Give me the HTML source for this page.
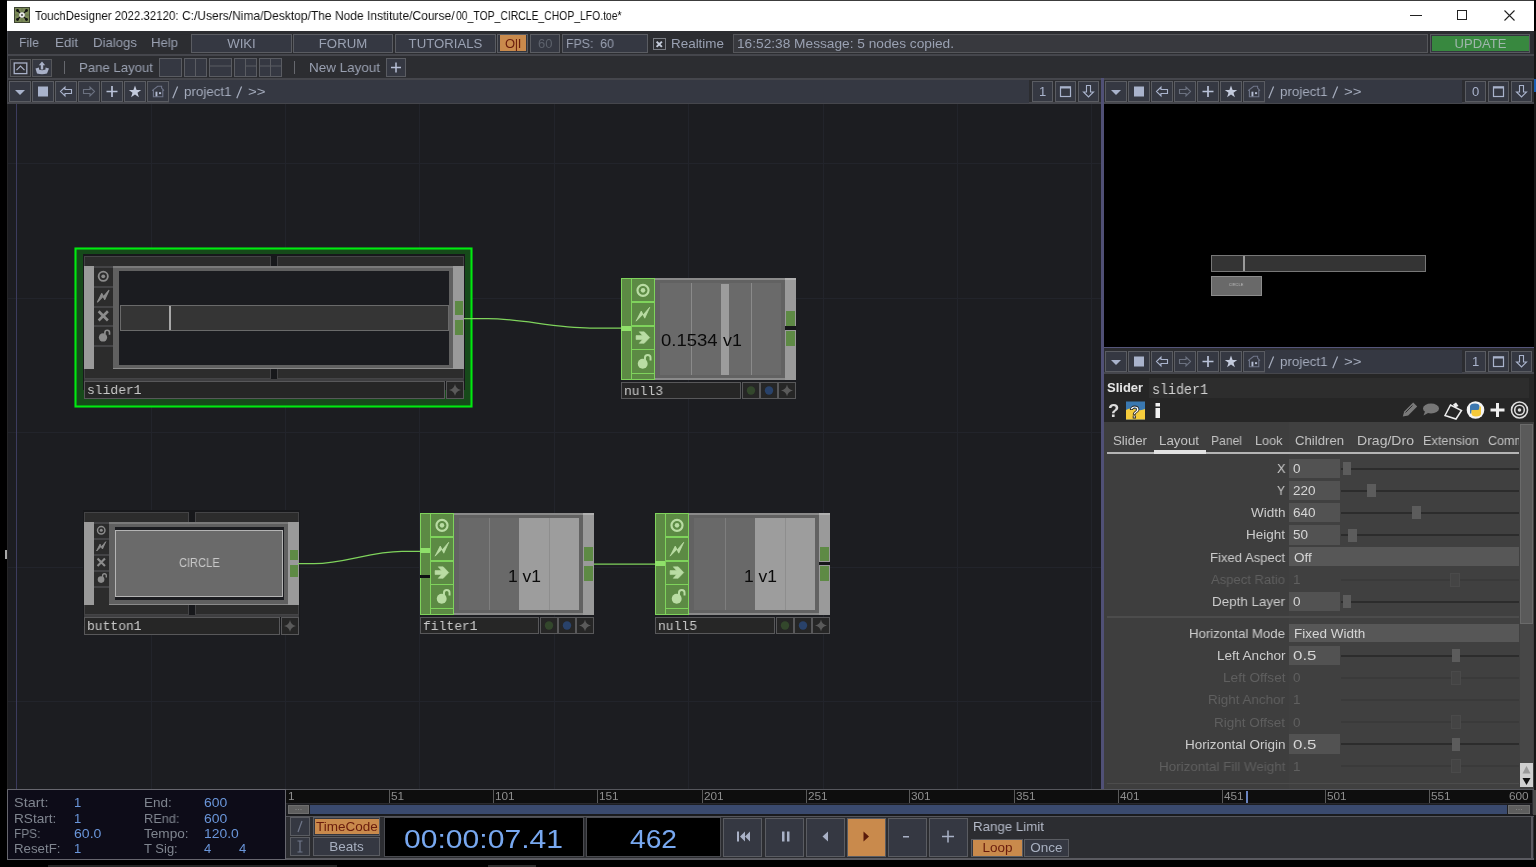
<!DOCTYPE html>
<html><head><meta charset="utf-8">
<style>
*{margin:0;padding:0;box-sizing:border-box}
html,body{width:1536px;height:867px;overflow:hidden;background:#000;font-family:"Liberation Sans",sans-serif}
.a{position:absolute}
.t{position:absolute;white-space:nowrap;line-height:1;will-change:transform}
.m{position:absolute;white-space:nowrap;line-height:1;will-change:transform;font-family:"Liberation Mono",monospace}
svg{overflow:visible}
</style></head><body>
<div class="a" style="left:7px;top:0px;width:1527px;height:1px;background:#3c3c3c;"></div>
<div class="a" style="left:7px;top:1px;width:1527px;height:30px;background:#fff;"></div>
<svg class="a" style="left:14px;top:7px" width="16" height="16" viewBox="0 0 16 16">
<rect x="0.5" y="0.5" width="15" height="15" fill="#7b8a58" stroke="#3d4432" stroke-width="1"/>
<path d="M8 1V15M1 8H15" stroke="#66744a" stroke-width="1"/>
<path d="M3.5 3.5L6.5 6.5M12.5 3.5L9.5 6.5M3.5 12.5L6.5 9.5M12.5 12.5L9.5 9.5" stroke="#1a1a1a" stroke-width="1.4"/>
<circle cx="3.5" cy="3.5" r="1.4" fill="#111"/><circle cx="12.5" cy="3.5" r="1.4" fill="#111"/><circle cx="3.5" cy="12.5" r="1.4" fill="#111"/><circle cx="12.5" cy="12.5" r="1.4" fill="#111"/>
<circle cx="8" cy="8" r="2.8" fill="#e8e8e8"/><circle cx="8" cy="8" r="0.9" fill="#333"/>
</svg>
<div class="t" style="left:35px;top:8.99px;font-size:13px;color:#111;transform:scaleX(0.8830);transform-origin:0 0;">TouchDesigner 2022.32120:</div>
<div class="t" style="left:182.3px;top:8.99px;font-size:13px;color:#111;transform:scaleX(0.9244);transform-origin:0 0;">C:/Users/Nima/Desktop/The Node Institute/Course/</div>
<div class="t" style="left:456px;top:8.99px;font-size:13px;color:#111;transform:scaleX(0.7995);transform-origin:0 0;">00_TOP_CIRCLE_CHOP_LFO.toe*</div>
<div class="a" style="left:1410px;top:15px;width:12px;height:1px;background:#222;"></div>
<div class="a" style="left:1457px;top:10px;width:10px;height:10px;border:1px solid #222;"></div>
<svg class="a" style="left:1504px;top:10px" width="11" height="11" viewBox="0 0 11 11"><path d="M0.5 0.5L10.5 10.5M10.5 0.5L0.5 10.5" stroke="#222" stroke-width="1.1"/></svg>
<div class="a" style="left:7px;top:31px;width:1527px;height:829px;background:#2c2d31;"></div>
<div class="a" style="left:7px;top:31px;width:1px;height:758px;background:#45464c;"></div>
<div class="t" style="left:19px;top:36.07px;font-size:13.5px;color:#9aa1b2;transform:scaleX(0.9189);transform-origin:0 0;">File</div>
<div class="t" style="left:55px;top:36.07px;font-size:13.5px;color:#9aa1b2;transform:scaleX(0.9886);transform-origin:0 0;">Edit</div>
<div class="t" style="left:93px;top:36.07px;font-size:13.5px;color:#9aa1b2;transform:scaleX(0.9771);transform-origin:0 0;">Dialogs</div>
<div class="t" style="left:151px;top:36.07px;font-size:13.5px;color:#9aa1b2;transform:scaleX(0.9724);transform-origin:0 0;">Help</div>
<div class="a" style="left:191px;top:34px;width:101px;height:19px;background:#353842;border:1px solid #5a5c62;"></div>
<div class="t" style="left:191px;top:36.62px;width:101px;text-align:center;font-size:13.2px;color:#9aa1b2">WIKI</div>
<div class="a" style="left:293px;top:34px;width:100px;height:19px;background:#353842;border:1px solid #5a5c62;"></div>
<div class="t" style="left:293px;top:36.62px;width:100px;text-align:center;font-size:13.2px;color:#9aa1b2">FORUM</div>
<div class="a" style="left:395px;top:34px;width:101px;height:19px;background:#353842;border:1px solid #5a5c62;"></div>
<div class="t" style="left:395px;top:36.62px;width:101px;text-align:center;font-size:13.2px;color:#9aa1b2">TUTORIALS</div>
<div class="a" style="left:497px;top:34px;width:31px;height:19px;background:#34363e;border:1px solid #5a5c62;"></div>
<div class="a" style="left:500px;top:35px;width:26px;height:16px;background:#c98a4c;"></div>
<div class="t" style="left:500px;top:36.59px;width:26px;text-align:center;font-size:13px;color:#6a1c0c;letter-spacing:-0.3px">O|I</div>
<div class="a" style="left:530px;top:34px;width:30px;height:19px;background:#353842;border:1px solid #5a5c62;"></div>
<div class="t" style="left:538px;top:36.59px;font-size:13px;color:#5d626c;">60</div>
<div class="a" style="left:562px;top:34px;width:86px;height:19px;background:#353842;border:1px solid #5a5c62;"></div>
<div class="t" style="left:566px;top:36.59px;font-size:13px;color:#9aa1b2;transform:scaleX(0.9490);transform-origin:0 0;">FPS:&nbsp;&nbsp;60</div>
<div class="a" style="left:653px;top:37.5px;width:12.5px;height:12.5px;border:1px solid #7a7d84;"></div>
<svg class="a" style="left:653px;top:37.5px" width="12.5" height="12.5"><path d="M3.6 3.6L8.9 8.9M8.9 3.6L3.6 8.9" stroke="#c3cad8" stroke-width="2"/></svg>
<div class="t" style="left:671px;top:37.49px;font-size:13px;color:#9aa1b2;transform:scaleX(1.0332);transform-origin:0 0;">Realtime</div>
<div class="a" style="left:733px;top:34px;width:695px;height:19px;background:#38393e;border:1px solid #55565a;"></div>
<div class="t" style="left:737px;top:36.59px;font-size:13px;color:#9aa1b2;transform:scaleX(1.0535);transform-origin:0 0;">16:52:38 Message: 5 nodes copied.</div>
<div class="a" style="left:1430px;top:34px;width:100px;height:19px;background:#34363e;border:1px solid #585a60;"></div>
<div class="a" style="left:1432px;top:35.5px;width:97px;height:15.5px;background:#38883f;"></div>
<div class="t" style="left:1431px;top:36.59px;width:99px;text-align:center;font-size:13px;color:#9fb6ac">UPDATE</div>
<div class="a" style="left:8px;top:54px;width:1526px;height:2px;background:#45464c;"></div>
<div class="a" style="left:10px;top:58.5px;width:20.5px;height:18.5px;background:#2f3035;border:1px solid #55565a;"></div>
<div class="a" style="left:32px;top:58.5px;width:20px;height:18.5px;background:#353842;border:1px solid #55565a;"></div>
<svg class="a" style="left:10px;top:58.5px" width="21" height="19"><rect x="4.2" y="4" width="12.6" height="10.6" fill="none" stroke="#a9b1c8" stroke-width="1.3"/><path d="M6.5 11.2L10.5 7.2L14.5 11.2" fill="none" stroke="#a9b1c8" stroke-width="1.2"/></svg>
<svg class="a" style="left:32px;top:58.5px" width="20" height="19"><path d="M3.5 9.5L7 8.5V10.5Q10 12 13.5 10.5V8.5L17 9.5L15 14.5Q10 16 5 14.5Z" fill="#a9b1c8"/><path d="M10 2.5L6.8 6.2H8.8V10.5H11.2V6.2H13.2Z" fill="#a9b1c8"/></svg>
<div class="a" style="left:64px;top:61px;width:1px;height:13px;background:#66686e;"></div>
<div class="t" style="left:79px;top:61.07px;font-size:13.5px;color:#9aa1b2;transform:scaleX(0.9761);transform-origin:0 0;">Pane Layout</div>
<div class="a" style="left:159px;top:58px;width:23px;height:19px;background:#353842;border:1px solid #5a5c62;"></div>
<div class="a" style="left:184px;top:58px;width:23px;height:19px;background:#353842;border:1px solid #5a5c62;"></div>
<div class="a" style="left:209px;top:58px;width:23px;height:19px;background:#353842;border:1px solid #5a5c62;"></div>
<div class="a" style="left:234px;top:58px;width:23px;height:19px;background:#353842;border:1px solid #5a5c62;"></div>
<div class="a" style="left:259px;top:58px;width:23px;height:19px;background:#353842;border:1px solid #5a5c62;"></div>
<svg class="a" style="left:184px;top:58px" width="23" height="19"><path d="M11.5 1V18" stroke="#5a5c62"/></svg>
<svg class="a" style="left:209px;top:58px" width="23" height="19"><path d="M1 8H22" stroke="#5a5c62"/></svg>
<svg class="a" style="left:234px;top:58px" width="23" height="19"><path d="M11.5 1V18M11.5 8H22" stroke="#5a5c62"/></svg>
<svg class="a" style="left:259px;top:58px" width="23" height="19"><path d="M11.5 1V18M1 8H22" stroke="#5a5c62"/></svg>
<div class="a" style="left:294px;top:61px;width:1px;height:13px;background:#66686e;"></div>
<div class="t" style="left:309px;top:61.07px;font-size:13.5px;color:#9aa1b2;transform:scaleX(0.9958);transform-origin:0 0;">New Layout</div>
<div class="a" style="left:386px;top:58px;width:20px;height:19px;background:#353842;border:1px solid #5a5c62;"></div>
<svg class="a" style="left:386px;top:58px" width="20" height="19"><path d="M10 4.5V14.5M5 9.5H15" stroke="#b8c0d8" stroke-width="1.5"/></svg>
<div class="a" style="left:8px;top:78px;width:1526px;height:1px;background:#45464c;"></div>
<div class="a" style="left:8px;top:78px;width:1093px;height:26px;background:#2c2d31;"></div>
<div class="a" style="left:8px;top:78px;width:1093px;height:2px;background:#45464c;"></div>
<div class="a" style="left:8px;top:102px;width:1093px;height:2px;background:#45464c;"></div>
<div class="a" style="left:9px;top:81px;width:21.5px;height:21px;background:#353842;border:1px solid #5a5c62;"></div>
<div class="a" style="left:32px;top:81px;width:21.5px;height:21px;background:#353842;border:1px solid #5a5c62;"></div>
<div class="a" style="left:55px;top:81px;width:21.5px;height:21px;background:#353842;border:1px solid #5a5c62;"></div>
<div class="a" style="left:78px;top:81px;width:21.5px;height:21px;background:#353842;border:1px solid #5a5c62;"></div>
<div class="a" style="left:101px;top:81px;width:21.5px;height:21px;background:#353842;border:1px solid #5a5c62;"></div>
<div class="a" style="left:124px;top:81px;width:21.5px;height:21px;background:#353842;border:1px solid #5a5c62;"></div>
<div class="a" style="left:147px;top:81px;width:21.5px;height:21px;background:#353842;border:1px solid #5a5c62;"></div>
<svg class="a" style="left:9px;top:81px" width="22" height="21"><path d="M6 9H16L11 14Z" fill="#a9b3cc"/></svg>
<svg class="a" style="left:32px;top:81px" width="22" height="21"><rect x="6" y="5.5" width="10" height="10" fill="#a9b3cc"/></svg>
<svg class="a" style="left:55px;top:81px" width="22" height="21"><path d="M5.5 10.5L10 6V8.5H16.5V12.5H10V15Z" fill="none" stroke="#a9b3cc" stroke-width="1.1" stroke-linejoin="miter"/></svg>
<svg class="a" style="left:78px;top:81px" width="22" height="21"><path d="M16.5 10.5L12 6V8.5H5.5V12.5H12V15Z" fill="none" stroke="#6b7180" stroke-width="1.1"/></svg>
<svg class="a" style="left:101px;top:81px" width="22" height="21"><path d="M11 5V16M5.5 10.5H16.5" stroke="#b9c1d8" stroke-width="1.7"/></svg>
<svg class="a" style="left:124px;top:81px" width="22" height="21"><path d="M11 4.5L12.6 8.9L17.2 8.9L13.5 11.7L14.9 16.2L11 13.4L7.1 16.2L8.5 11.7L4.8 8.9L9.4 8.9Z" fill="#c3cadc"/></svg>
<svg class="a" style="left:147px;top:81px" width="22" height="21"><path d="M5.1 9.6L10.7 5.2H14.6V7L17 9.6M6.4 9V15.7H15.8V9" fill="none" stroke="#70768a" stroke-width="1.1"/><rect x="8.5" y="10.7" width="1.9" height="4.6" fill="#b4bcd2"/><rect x="12" y="11.2" width="2.1" height="1.9" fill="#b4bcd2"/></svg>
<div class="a" style="left:169px;top:80px;width:860px;height:23px;background:#353842;"></div>
<svg class="a" style="left:169px;top:78px" width="80" height="26"><path d="M3.8 20.2L8.6 8.6M67.8 20.2L72.6 8.6" stroke="#a3aabb" stroke-width="1.25"/></svg>
<div class="t" style="left:183.5px;top:84.57px;font-size:13.5px;color:#a3aabb;transform:scaleX(0.9889);transform-origin:0 0;">project1</div>
<div class="t" style="left:247.5px;top:84.57px;font-size:13.5px;color:#a3aabb;transform:scaleX(1.1089);transform-origin:0 0;">&gt;&gt;</div>
<div class="a" style="left:1032px;top:81px;width:21px;height:21px;background:#353842;border:1px solid #5a5c62;"></div>
<div class="a" style="left:1055px;top:81px;width:21px;height:21px;background:#353842;border:1px solid #5a5c62;"></div>
<div class="a" style="left:1078px;top:81px;width:21px;height:21px;background:#353842;border:1px solid #5a5c62;"></div>
<div class="t" style="left:1032px;top:84.99px;width:21px;text-align:center;font-size:13px;color:#a9b3cc">1</div>
<svg class="a" style="left:1055px;top:81px" width="21" height="21"><rect x="5.5" y="6" width="10" height="9.5" fill="none" stroke="#a9b3cc" stroke-width="1.2"/><rect x="5" y="5.5" width="11" height="2" fill="#a9b3cc"/></svg>
<svg class="a" style="left:1078px;top:81px" width="21" height="21"><path d="M8.5 4.5H12.5V11H15.5L10.5 16L5.5 11H8.5Z" fill="none" stroke="#a9b3cc" stroke-width="1.1"/></svg>
<div class="a" style="left:1104px;top:78px;width:430px;height:26px;background:#2c2d31;"></div>
<div class="a" style="left:1104px;top:78px;width:430px;height:2px;background:#45464c;"></div>
<div class="a" style="left:1104px;top:102px;width:430px;height:2px;background:#45464c;"></div>
<div class="a" style="left:1105px;top:81px;width:21.5px;height:21px;background:#353842;border:1px solid #5a5c62;"></div>
<div class="a" style="left:1128px;top:81px;width:21.5px;height:21px;background:#353842;border:1px solid #5a5c62;"></div>
<div class="a" style="left:1151px;top:81px;width:21.5px;height:21px;background:#353842;border:1px solid #5a5c62;"></div>
<div class="a" style="left:1174px;top:81px;width:21.5px;height:21px;background:#353842;border:1px solid #5a5c62;"></div>
<div class="a" style="left:1197px;top:81px;width:21.5px;height:21px;background:#353842;border:1px solid #5a5c62;"></div>
<div class="a" style="left:1220px;top:81px;width:21.5px;height:21px;background:#353842;border:1px solid #5a5c62;"></div>
<div class="a" style="left:1243px;top:81px;width:21.5px;height:21px;background:#353842;border:1px solid #5a5c62;"></div>
<svg class="a" style="left:1105px;top:81px" width="22" height="21"><path d="M6 9H16L11 14Z" fill="#a9b3cc"/></svg>
<svg class="a" style="left:1128px;top:81px" width="22" height="21"><rect x="6" y="5.5" width="10" height="10" fill="#a9b3cc"/></svg>
<svg class="a" style="left:1151px;top:81px" width="22" height="21"><path d="M5.5 10.5L10 6V8.5H16.5V12.5H10V15Z" fill="none" stroke="#a9b3cc" stroke-width="1.1" stroke-linejoin="miter"/></svg>
<svg class="a" style="left:1174px;top:81px" width="22" height="21"><path d="M16.5 10.5L12 6V8.5H5.5V12.5H12V15Z" fill="none" stroke="#6b7180" stroke-width="1.1"/></svg>
<svg class="a" style="left:1197px;top:81px" width="22" height="21"><path d="M11 5V16M5.5 10.5H16.5" stroke="#b9c1d8" stroke-width="1.7"/></svg>
<svg class="a" style="left:1220px;top:81px" width="22" height="21"><path d="M11 4.5L12.6 8.9L17.2 8.9L13.5 11.7L14.9 16.2L11 13.4L7.1 16.2L8.5 11.7L4.8 8.9L9.4 8.9Z" fill="#c3cadc"/></svg>
<svg class="a" style="left:1243px;top:81px" width="22" height="21"><path d="M5.1 9.6L10.7 5.2H14.6V7L17 9.6M6.4 9V15.7H15.8V9" fill="none" stroke="#70768a" stroke-width="1.1"/><rect x="8.5" y="10.7" width="1.9" height="4.6" fill="#b4bcd2"/><rect x="12" y="11.2" width="2.1" height="1.9" fill="#b4bcd2"/></svg>
<div class="a" style="left:1265px;top:80px;width:197px;height:23px;background:#353842;"></div>
<svg class="a" style="left:1265px;top:78px" width="80" height="26"><path d="M3.8 20.2L8.6 8.6M67.8 20.2L72.6 8.6" stroke="#a3aabb" stroke-width="1.25"/></svg>
<div class="t" style="left:1279.5px;top:84.57px;font-size:13.5px;color:#a3aabb;transform:scaleX(0.9889);transform-origin:0 0;">project1</div>
<div class="t" style="left:1343.5px;top:84.57px;font-size:13.5px;color:#a3aabb;transform:scaleX(1.1089);transform-origin:0 0;">&gt;&gt;</div>
<div class="a" style="left:1465px;top:81px;width:21px;height:21px;background:#353842;border:1px solid #5a5c62;"></div>
<div class="a" style="left:1488px;top:81px;width:21px;height:21px;background:#353842;border:1px solid #5a5c62;"></div>
<div class="a" style="left:1511px;top:81px;width:21px;height:21px;background:#353842;border:1px solid #5a5c62;"></div>
<div class="t" style="left:1465px;top:84.99px;width:21px;text-align:center;font-size:13px;color:#a9b3cc">0</div>
<svg class="a" style="left:1488px;top:81px" width="21" height="21"><rect x="5.5" y="6" width="10" height="9.5" fill="none" stroke="#a9b3cc" stroke-width="1.2"/><rect x="5" y="5.5" width="11" height="2" fill="#a9b3cc"/></svg>
<svg class="a" style="left:1511px;top:81px" width="21" height="21"><path d="M8.5 4.5H12.5V11H15.5L10.5 16L5.5 11H8.5Z" fill="none" stroke="#a9b3cc" stroke-width="1.1"/></svg>
<div class="a" style="left:7px;top:104px;width:1px;height:685px;background:#262628;"></div>
<div class="a" style="left:8px;top:104px;width:1093px;height:685px;background:#1c1d21;"></div>
<div class="a" style="left:151px;top:104px;width:1px;height:685px;background:#22242b;"></div>
<div class="a" style="left:285px;top:104px;width:1px;height:685px;background:#22242b;"></div>
<div class="a" style="left:419px;top:104px;width:1px;height:685px;background:#22242b;"></div>
<div class="a" style="left:554px;top:104px;width:1px;height:685px;background:#22242b;"></div>
<div class="a" style="left:688px;top:104px;width:1px;height:685px;background:#22242b;"></div>
<div class="a" style="left:823px;top:104px;width:1px;height:685px;background:#22242b;"></div>
<div class="a" style="left:957px;top:104px;width:1px;height:685px;background:#22242b;"></div>
<div class="a" style="left:1091px;top:104px;width:1px;height:685px;background:#22242b;"></div>
<div class="a" style="left:8px;top:163px;width:1093px;height:1px;background:#22242b;"></div>
<div class="a" style="left:8px;top:298px;width:1093px;height:1px;background:#22242b;"></div>
<div class="a" style="left:8px;top:432px;width:1093px;height:1px;background:#22242b;"></div>
<div class="a" style="left:8px;top:567px;width:1093px;height:1px;background:#22242b;"></div>
<div class="a" style="left:8px;top:701px;width:1093px;height:1px;background:#22242b;"></div>
<div class="a" style="left:16px;top:104px;width:1px;height:685px;background:#3c3c5e;"></div>
<div class="a" style="left:75px;top:248px;width:397px;height:159px;background:#164a1a;"></div>
<svg class="a" style="left:0;top:0" width="500" height="420"><rect x="75.5" y="248.5" width="396" height="158" fill="none" stroke="#00ea10" stroke-width="2.1"/></svg>
<div class="a" style="left:83px;top:254px;width:382px;height:136px;background:#17181b;"></div>
<div class="a" style="left:84px;top:256px;width:187px;height:10px;background:#2c2c2c;border:1px solid #444446;border-bottom:none"></div>
<div class="a" style="left:277px;top:256px;width:187px;height:10px;background:#2c2c2c;border:1px solid #444446;border-bottom:none"></div>
<div class="a" style="left:84px;top:369px;width:187px;height:10px;background:#2c2c2c;border:1px solid #444446;border-top:none"></div>
<div class="a" style="left:277px;top:369px;width:187px;height:10px;background:#2c2c2c;border:1px solid #444446;border-top:none"></div>
<div class="a" style="left:84px;top:379px;width:380px;height:2px;background:#3e3e40;"></div>
<div class="a" style="left:84px;top:266px;width:10px;height:103px;background:#9a9a9a;"></div>
<div class="a" style="left:94px;top:266px;width:18.5px;height:103px;background:#2c2c2c;"></div>
<div class="a" style="left:94px;top:266px;width:18.5px;height:1.6px;background:#444446;"></div>
<div class="a" style="left:94px;top:286px;width:18.5px;height:1.6px;background:#444446;"></div>
<div class="a" style="left:94px;top:306px;width:18.5px;height:1.6px;background:#444446;"></div>
<div class="a" style="left:94px;top:325px;width:18.5px;height:1.6px;background:#444446;"></div>
<div class="a" style="left:94px;top:345px;width:18.5px;height:1.6px;background:#444446;"></div>
<svg class="a" style="left:94px;top:266px" width="18.5" height="200" viewBox="0 0 18.5 200"><g transform="translate(9.25 9.903846153846153) scale(0.8253205128205128)"><circle cx="0" cy="0.5" r="5.6" fill="none" stroke="#8c8c8c" stroke-width="2.2"/><circle cx="0" cy="0.5" r="2.3" fill="#8c8c8c"/></g><path transform="translate(9.25 29.71153846153846) scale(0.8253205128205128)" d="M-7 7.6L-1.8 -2.6L0.3 1.2L6.8 -6.4L1.8 4.6L-0.2 0.8Z" fill="#8c8c8c" stroke="#8c8c8c" stroke-width="1.4" stroke-linejoin="round"/><path transform="translate(9.25 49.51923076923077) scale(0.8253205128205128)" d="M-5.6 -5.2L5.6 6M5.6 -5.2L-5.6 6" stroke="#8c8c8c" stroke-width="3.2"/><g transform="translate(9.25 69.32692307692307) scale(0.8253205128205128)"><circle cx="-0.3" cy="2.6" r="5" fill="#8c8c8c"/><path d="M2 -1.2V-3.4A2.8 2.8 0 0 1 7.6 -3.4V-0.6" fill="none" stroke="#8c8c8c" stroke-width="2"/></g></svg>
<div class="a" style="left:112.5px;top:266px;width:340.5px;height:103px;background:#606060;"></div>
<div class="a" style="left:112.5px;top:266px;width:340.5px;height:2px;background:#7a7a7a;"></div>
<div class="a" style="left:112.5px;top:367.5px;width:340.5px;height:1.5px;background:#8a8a8a;"></div>
<div class="a" style="left:119px;top:271px;width:329.5px;height:93.5px;background:#1b1c20;"></div>
<div class="a" style="left:119.5px;top:305px;width:329px;height:26px;background:#353535;border:1px solid #6a6a6a;"></div>
<div class="a" style="left:169px;top:306px;width:1.5px;height:24px;background:#a8a8a8;"></div>
<div class="a" style="left:453px;top:266px;width:11px;height:103px;background:#9a9a9a;"></div>
<div class="a" style="left:455px;top:301px;width:8px;height:13.5px;background:#5e8a45;"></div>
<div class="a" style="left:455px;top:319.5px;width:8px;height:15.5px;background:#5e8a45;"></div>
<div class="a" style="left:84px;top:381px;width:361px;height:17.5px;background:#262626;border:1px solid #58585a;"></div>
<div class="m" style="left:87px;top:384.16px;font-size:13.5px;color:#c9c9c9;transform:scaleX(0.9626);transform-origin:0 0;">slider1</div>
<div class="a" style="left:446px;top:381px;width:18px;height:17.5px;background:#262626;border:1px solid #58585a;"></div>
<svg class="a" style="left:446px;top:381px" width="18" height="18"><path d="M9 3Q9.9 8.1 15 9Q9.9 9.9 9 15Q8.1 9.9 3 9Q8.1 8.1 9 3Z" fill="#5a5a5a"/></svg>
<div class="a" style="left:83px;top:510px;width:217px;height:116px;background:#17181b;"></div>
<div class="a" style="left:84px;top:512px;width:105px;height:10px;background:#2c2c2c;border:1px solid #444446;border-bottom:none"></div>
<div class="a" style="left:195px;top:512px;width:104px;height:10px;background:#2c2c2c;border:1px solid #444446;border-bottom:none"></div>
<div class="a" style="left:84px;top:605px;width:105px;height:10px;background:#2c2c2c;border:1px solid #444446;border-top:none"></div>
<div class="a" style="left:195px;top:605px;width:104px;height:10px;background:#2c2c2c;border:1px solid #444446;border-top:none"></div>
<div class="a" style="left:84px;top:615px;width:215px;height:2px;background:#3e3e40;"></div>
<div class="a" style="left:84px;top:522px;width:10px;height:83px;background:#9a9a9a;"></div>
<div class="a" style="left:94px;top:522px;width:14.5px;height:83px;background:#2c2c2c;"></div>
<div class="a" style="left:94px;top:522px;width:14.5px;height:1.6px;background:#444446;"></div>
<div class="a" style="left:94px;top:538px;width:14.5px;height:1.6px;background:#444446;"></div>
<div class="a" style="left:94px;top:554px;width:14.5px;height:1.6px;background:#444446;"></div>
<div class="a" style="left:94px;top:570px;width:14.5px;height:1.6px;background:#444446;"></div>
<div class="a" style="left:94px;top:586px;width:14.5px;height:1.6px;background:#444446;"></div>
<svg class="a" style="left:94px;top:522px" width="14.5" height="200" viewBox="0 0 14.5 200"><g transform="translate(7.25 7.980769230769231) scale(0.6650641025641025)"><circle cx="0" cy="0.5" r="5.6" fill="none" stroke="#8c8c8c" stroke-width="2.2"/><circle cx="0" cy="0.5" r="2.3" fill="#8c8c8c"/></g><path transform="translate(7.25 23.942307692307693) scale(0.6650641025641025)" d="M-7 7.6L-1.8 -2.6L0.3 1.2L6.8 -6.4L1.8 4.6L-0.2 0.8Z" fill="#8c8c8c" stroke="#8c8c8c" stroke-width="1.4" stroke-linejoin="round"/><path transform="translate(7.25 39.90384615384615) scale(0.6650641025641025)" d="M-5.6 -5.2L5.6 6M5.6 -5.2L-5.6 6" stroke="#8c8c8c" stroke-width="3.2"/><g transform="translate(7.25 55.86538461538461) scale(0.6650641025641025)"><circle cx="-0.3" cy="2.6" r="5" fill="#8c8c8c"/><path d="M2 -1.2V-3.4A2.8 2.8 0 0 1 7.6 -3.4V-0.6" fill="none" stroke="#8c8c8c" stroke-width="2"/></g></svg>
<div class="a" style="left:108.5px;top:522px;width:179.5px;height:83px;background:#606060;"></div>
<div class="a" style="left:108.5px;top:522px;width:179.5px;height:2px;background:#7a7a7a;"></div>
<div class="a" style="left:108.5px;top:603.5px;width:179.5px;height:1.5px;background:#8a8a8a;"></div>
<div class="a" style="left:114.5px;top:527px;width:169px;height:73px;background:#1b1c20;"></div>
<div class="a" style="left:115px;top:530px;width:168px;height:67px;background:#6a6a6a;border:1px solid #b4b4b4;"></div>
<div class="t" style="left:178.75px;top:557.16px;font-size:12.8px;color:#c8c8c8;transform:scaleX(0.8650);transform-origin:0 0;">CIRCLE</div>
<div class="a" style="left:288px;top:522px;width:11px;height:83px;background:#9a9a9a;"></div>
<div class="a" style="left:290px;top:550px;width:8px;height:10px;background:#5e8a45;"></div>
<div class="a" style="left:290px;top:565px;width:8px;height:12px;background:#5e8a45;"></div>
<div class="a" style="left:84px;top:617px;width:196px;height:17.5px;background:#262626;border:1px solid #58585a;"></div>
<div class="m" style="left:87px;top:620.16px;font-size:13.5px;color:#c9c9c9;transform:scaleX(0.9626);transform-origin:0 0;">button1</div>
<div class="a" style="left:281px;top:617px;width:18px;height:17.5px;background:#262626;border:1px solid #58585a;"></div>
<svg class="a" style="left:281px;top:617px" width="18" height="18"><path d="M9 3Q9.9 8.1 15 9Q9.9 9.9 9 15Q8.1 9.9 3 9Q8.1 8.1 9 3Z" fill="#5a5a5a"/></svg>
<div class="a" style="left:621px;top:278px;width:11px;height:101.5px;background:#5c8a44;border:1px solid #7fd35c;"></div>
<div class="a" style="left:621px;top:325.7px;width:11px;height:4.900000000000034px;background:#8fe06a;"></div>
<div class="a" style="left:631px;top:278px;width:24px;height:101.5px;background:#5c8a44;border:1.5px solid #7fd35c;"></div>
<div class="a" style="left:631px;top:301.25px;width:24px;height:1.5px;background:#7fd35c;"></div>
<div class="a" style="left:631px;top:325.0px;width:24px;height:1.5px;background:#7fd35c;"></div>
<div class="a" style="left:631px;top:348.75px;width:24px;height:1.5px;background:#7fd35c;"></div>
<div class="a" style="left:631px;top:372.5px;width:24px;height:1.5px;background:#7fd35c;"></div>
<svg class="a" style="left:631px;top:278px" width="24" height="200" viewBox="0 0 24 200"><g transform="translate(12.0 11.875) scale(0.9895833333333334)"><circle cx="0" cy="0.5" r="5.6" fill="none" stroke="#b9dca3" stroke-width="2.2"/><circle cx="0" cy="0.5" r="2.3" fill="#b9dca3"/></g><path transform="translate(12.0 35.625) scale(0.9895833333333334)" d="M-7 7.6L-1.8 -2.6L0.3 1.2L6.8 -6.4L1.8 4.6L-0.2 0.8Z" fill="#b9dca3" stroke="#b9dca3" stroke-width="0.8" stroke-linejoin="round"/><path transform="translate(12.0 59.375) scale(0.9895833333333334)" d="M-7 -1.8H-0.5L-3.8 -5.6H1.2L6.8 0.2L1.2 6H-3.8L-0.5 2.2H-7Z" fill="#b9dca3" stroke="#b9dca3" stroke-width="0.6" stroke-linejoin="round"/><g transform="translate(12.0 83.125) scale(0.9895833333333334)"><circle cx="-0.3" cy="2.6" r="5" fill="#b9dca3"/><path d="M2 -1.2V-3.4A2.8 2.8 0 0 1 7.6 -3.4V-0.6" fill="none" stroke="#b9dca3" stroke-width="2"/></g></svg>
<div class="a" style="left:655px;top:278px;width:130px;height:101.5px;background:#626262;"></div>
<div class="a" style="left:655px;top:278px;width:130px;height:1.5px;background:#8a8a8a;"></div>
<div class="a" style="left:655px;top:378.0px;width:130px;height:1.5px;background:#8a8a8a;"></div>
<div class="a" style="left:660px;top:282.5px;width:121px;height:92.5px;background:#6a6a6a;"></div>
<div class="a" style="left:690.5px;top:282.5px;width:1.5px;height:92.5px;background:#8a8a8a;"></div>
<div class="a" style="left:750.5px;top:282.5px;width:1.5px;height:92.5px;background:#8a8a8a;"></div>
<div class="a" style="left:720.7px;top:283.5px;width:8.8px;height:91.5px;background:#9c9c9c;"></div>
<div class="t" style="left:661px;top:333.25px;font-size:16px;color:#0a0a0a;transform:scaleX(1.1566);transform-origin:0 0;">0.1534</div>
<div class="t" style="left:723.2px;top:333.25px;font-size:16px;color:#0a0a0a;transform:scaleX(1.1120);transform-origin:0 0;">v1</div>
<div class="a" style="left:785px;top:278px;width:11px;height:101.5px;background:#9a9a9a;"></div>
<div class="a" style="left:785px;top:278px;width:11px;height:1.5px;background:#b0b0b0;"></div>
<div class="a" style="left:786px;top:311.2px;width:9px;height:15.0px;background:#5e8a45;"></div>
<div class="a" style="left:786px;top:330.7px;width:9px;height:15.0px;background:#5e8a45;"></div>
<div class="a" style="left:785px;top:326.2px;width:11px;height:3.5px;background:#16171a;"></div>
<div class="a" style="left:621px;top:381.5px;width:120px;height:17px;background:#262626;border:1px solid #58585a;"></div>
<div class="m" style="left:624px;top:384.66px;font-size:13.5px;color:#c9c9c9;transform:scaleX(0.9626);transform-origin:0 0;">null3</div>
<div class="a" style="left:742px;top:381.5px;width:18px;height:17px;background:#262626;border:1px solid #58585a;"></div>
<svg class="a" style="left:742px;top:381.5px" width="18" height="17"><circle cx="9" cy="8.5" r="4.2" fill="#33472c"/></svg>
<div class="a" style="left:760px;top:381.5px;width:18px;height:17px;background:#262626;border:1px solid #58585a;"></div>
<svg class="a" style="left:760px;top:381.5px" width="18" height="17"><circle cx="9" cy="8.5" r="4.2" fill="#29426a"/></svg>
<div class="a" style="left:778px;top:381.5px;width:18px;height:17px;background:#262626;border:1px solid #58585a;"></div>
<svg class="a" style="left:778px;top:381.5px" width="18" height="17"><path d="M9 2.5Q9.9 7.6 15 8.5Q9.9 9.4 9 14.5Q8.1 9.4 3 8.5Q8.1 7.6 9 2.5Z" fill="#5a5a5a"/></svg>
<div class="a" style="left:419.5px;top:513px;width:11px;height:101.5px;background:#5c8a44;border:1px solid #7fd35c;"></div>
<div class="a" style="left:419.5px;top:575px;width:11px;height:3.2px;background:#0e0f12;"></div>
<div class="a" style="left:419.5px;top:548.3px;width:11px;height:5.0px;background:#8fe06a;"></div>
<div class="a" style="left:429.5px;top:513px;width:24px;height:101.5px;background:#5c8a44;border:1.5px solid #7fd35c;"></div>
<div class="a" style="left:429.5px;top:536.25px;width:24px;height:1.5px;background:#7fd35c;"></div>
<div class="a" style="left:429.5px;top:560.0px;width:24px;height:1.5px;background:#7fd35c;"></div>
<div class="a" style="left:429.5px;top:583.75px;width:24px;height:1.5px;background:#7fd35c;"></div>
<div class="a" style="left:429.5px;top:607.5px;width:24px;height:1.5px;background:#7fd35c;"></div>
<svg class="a" style="left:429.5px;top:513px" width="24" height="200" viewBox="0 0 24 200"><g transform="translate(12.0 11.875) scale(0.9895833333333334)"><circle cx="0" cy="0.5" r="5.6" fill="none" stroke="#b9dca3" stroke-width="2.2"/><circle cx="0" cy="0.5" r="2.3" fill="#b9dca3"/></g><path transform="translate(12.0 35.625) scale(0.9895833333333334)" d="M-7 7.6L-1.8 -2.6L0.3 1.2L6.8 -6.4L1.8 4.6L-0.2 0.8Z" fill="#b9dca3" stroke="#b9dca3" stroke-width="0.8" stroke-linejoin="round"/><path transform="translate(12.0 59.375) scale(0.9895833333333334)" d="M-7 -1.8H-0.5L-3.8 -5.6H1.2L6.8 0.2L1.2 6H-3.8L-0.5 2.2H-7Z" fill="#b9dca3" stroke="#b9dca3" stroke-width="0.6" stroke-linejoin="round"/><g transform="translate(12.0 83.125) scale(0.9895833333333334)"><circle cx="-0.3" cy="2.6" r="5" fill="#b9dca3"/><path d="M2 -1.2V-3.4A2.8 2.8 0 0 1 7.6 -3.4V-0.6" fill="none" stroke="#b9dca3" stroke-width="2"/></g></svg>
<div class="a" style="left:453.5px;top:513px;width:129.5px;height:101.5px;background:#626262;"></div>
<div class="a" style="left:453.5px;top:513px;width:129.5px;height:1.5px;background:#8a8a8a;"></div>
<div class="a" style="left:453.5px;top:613.0px;width:129.5px;height:1.5px;background:#8a8a8a;"></div>
<div class="a" style="left:458.5px;top:517.5px;width:120.5px;height:92.5px;background:#696969;"></div>
<div class="a" style="left:489px;top:517.5px;width:1.2px;height:92.5px;background:#7e7e7e;"></div>
<div class="a" style="left:519px;top:517.5px;width:60px;height:92.5px;background:#9d9d9d;"></div>
<div class="a" style="left:549.2px;top:517.5px;width:1.2px;height:92.5px;background:#8e8e8e;"></div>
<div class="t" style="left:508px;top:568.55px;font-size:16px;color:#0a0a0a;transform:scaleX(1.0909);transform-origin:0 0;">1 v1</div>
<div class="a" style="left:583px;top:513px;width:11px;height:101.5px;background:#9a9a9a;"></div>
<div class="a" style="left:583px;top:513px;width:11px;height:1.5px;background:#b0b0b0;"></div>
<div class="a" style="left:584px;top:547.3px;width:9px;height:13.400000000000091px;background:#5e8a45;"></div>
<div class="a" style="left:584px;top:565.9px;width:9px;height:15.100000000000023px;background:#5e8a45;"></div>
<div class="a" style="left:419.5px;top:616.5px;width:119.5px;height:17px;background:#262626;border:1px solid #58585a;"></div>
<div class="m" style="left:422.5px;top:619.66px;font-size:13.5px;color:#c9c9c9;transform:scaleX(0.9626);transform-origin:0 0;">filter1</div>
<div class="a" style="left:540px;top:616.5px;width:18px;height:17px;background:#262626;border:1px solid #58585a;"></div>
<svg class="a" style="left:540px;top:616.5px" width="18" height="17"><circle cx="9" cy="8.5" r="4.2" fill="#33472c"/></svg>
<div class="a" style="left:558px;top:616.5px;width:18px;height:17px;background:#262626;border:1px solid #58585a;"></div>
<svg class="a" style="left:558px;top:616.5px" width="18" height="17"><circle cx="9" cy="8.5" r="4.2" fill="#29426a"/></svg>
<div class="a" style="left:576px;top:616.5px;width:18px;height:17px;background:#262626;border:1px solid #58585a;"></div>
<svg class="a" style="left:576px;top:616.5px" width="18" height="17"><path d="M9 2.5Q9.9 7.6 15 8.5Q9.9 9.4 9 14.5Q8.1 9.4 3 8.5Q8.1 7.6 9 2.5Z" fill="#5a5a5a"/></svg>
<div class="a" style="left:655px;top:513px;width:11px;height:101.5px;background:#5c8a44;border:1px solid #7fd35c;"></div>
<div class="a" style="left:655px;top:560.8px;width:11px;height:5.0px;background:#8fe06a;"></div>
<div class="a" style="left:665px;top:513px;width:24px;height:101.5px;background:#5c8a44;border:1.5px solid #7fd35c;"></div>
<div class="a" style="left:665px;top:536.25px;width:24px;height:1.5px;background:#7fd35c;"></div>
<div class="a" style="left:665px;top:560.0px;width:24px;height:1.5px;background:#7fd35c;"></div>
<div class="a" style="left:665px;top:583.75px;width:24px;height:1.5px;background:#7fd35c;"></div>
<div class="a" style="left:665px;top:607.5px;width:24px;height:1.5px;background:#7fd35c;"></div>
<svg class="a" style="left:665px;top:513px" width="24" height="200" viewBox="0 0 24 200"><g transform="translate(12.0 11.875) scale(0.9895833333333334)"><circle cx="0" cy="0.5" r="5.6" fill="none" stroke="#b9dca3" stroke-width="2.2"/><circle cx="0" cy="0.5" r="2.3" fill="#b9dca3"/></g><path transform="translate(12.0 35.625) scale(0.9895833333333334)" d="M-7 7.6L-1.8 -2.6L0.3 1.2L6.8 -6.4L1.8 4.6L-0.2 0.8Z" fill="#b9dca3" stroke="#b9dca3" stroke-width="0.8" stroke-linejoin="round"/><path transform="translate(12.0 59.375) scale(0.9895833333333334)" d="M-7 -1.8H-0.5L-3.8 -5.6H1.2L6.8 0.2L1.2 6H-3.8L-0.5 2.2H-7Z" fill="#b9dca3" stroke="#b9dca3" stroke-width="0.6" stroke-linejoin="round"/><g transform="translate(12.0 83.125) scale(0.9895833333333334)"><circle cx="-0.3" cy="2.6" r="5" fill="#b9dca3"/><path d="M2 -1.2V-3.4A2.8 2.8 0 0 1 7.6 -3.4V-0.6" fill="none" stroke="#b9dca3" stroke-width="2"/></g></svg>
<div class="a" style="left:689px;top:513px;width:129.5px;height:101.5px;background:#626262;"></div>
<div class="a" style="left:689px;top:513px;width:129.5px;height:1.5px;background:#8a8a8a;"></div>
<div class="a" style="left:689px;top:613.0px;width:129.5px;height:1.5px;background:#8a8a8a;"></div>
<div class="a" style="left:694px;top:517.5px;width:120.5px;height:92.5px;background:#696969;"></div>
<div class="a" style="left:724.5px;top:517.5px;width:1.2px;height:92.5px;background:#7e7e7e;"></div>
<div class="a" style="left:754.5px;top:517.5px;width:60.0px;height:92.5px;background:#9d9d9d;"></div>
<div class="a" style="left:784.7px;top:517.5px;width:1.2px;height:92.5px;background:#8e8e8e;"></div>
<div class="t" style="left:743.5px;top:568.55px;font-size:16px;color:#0a0a0a;transform:scaleX(1.0909);transform-origin:0 0;">1 v1</div>
<div class="a" style="left:818.5px;top:513px;width:11px;height:101.5px;background:#9a9a9a;"></div>
<div class="a" style="left:818.5px;top:513px;width:11px;height:1.5px;background:#b0b0b0;"></div>
<div class="a" style="left:819.5px;top:547.3px;width:9px;height:13.400000000000091px;background:#5e8a45;"></div>
<div class="a" style="left:819.5px;top:565.9px;width:9px;height:15.100000000000023px;background:#5e8a45;"></div>
<div class="a" style="left:818.5px;top:561.5px;width:11px;height:3.5px;background:#16171a;"></div>
<div class="a" style="left:655px;top:616.5px;width:119.5px;height:17px;background:#262626;border:1px solid #58585a;"></div>
<div class="m" style="left:658px;top:619.66px;font-size:13.5px;color:#c9c9c9;transform:scaleX(0.9626);transform-origin:0 0;">null5</div>
<div class="a" style="left:775.5px;top:616.5px;width:18px;height:17px;background:#262626;border:1px solid #58585a;"></div>
<svg class="a" style="left:775.5px;top:616.5px" width="18" height="17"><circle cx="9" cy="8.5" r="4.2" fill="#33472c"/></svg>
<div class="a" style="left:793.5px;top:616.5px;width:18px;height:17px;background:#262626;border:1px solid #58585a;"></div>
<svg class="a" style="left:793.5px;top:616.5px" width="18" height="17"><circle cx="9" cy="8.5" r="4.2" fill="#29426a"/></svg>
<div class="a" style="left:811.5px;top:616.5px;width:18px;height:17px;background:#262626;border:1px solid #58585a;"></div>
<svg class="a" style="left:811.5px;top:616.5px" width="18" height="17"><path d="M9 2.5Q9.9 7.6 15 8.5Q9.9 9.4 9 14.5Q8.1 9.4 3 8.5Q8.1 7.6 9 2.5Z" fill="#5a5a5a"/></svg>
<svg class="a" style="left:0;top:0" width="1100" height="700"><g fill="none" stroke="#7fd35c" stroke-width="1.25"><path d="M464 318.5H488C520 318.5 555 328 590 328H621"/><path d="M298 563.6H314C345 563.6 370 551.4 402 551.4H420"/><path d="M594 564H655"/></g></svg>
<div class="a" style="left:1101px;top:78px;width:2.8px;height:711px;background:#505076;"></div>
<div class="a" style="left:1534px;top:31px;width:2px;height:836px;background:#161616;"></div>
<div class="a" style="left:1534px;top:79px;width:2px;height:13px;background:#1a5cb0;"></div>
<div class="a" style="left:1104px;top:104px;width:430px;height:243px;background:#000;"></div>
<div class="a" style="left:1211px;top:255px;width:215px;height:17px;background:#343434;border:1px solid #777;"></div>
<div class="a" style="left:1243px;top:256px;width:1.5px;height:15px;background:#9a9a9a;"></div>
<div class="a" style="left:1211px;top:275.5px;width:50.5px;height:20.5px;background:#696969;border:1px solid #8c8c8c;"></div>
<div class="t" style="left:1211px;top:283px;width:50px;text-align:center;font-size:4px;color:#bbb">CIRCLE</div>
<div class="a" style="left:1104px;top:347px;width:430px;height:2px;background:#55557a;"></div>
<div class="a" style="left:1104px;top:348px;width:430px;height:26px;background:#2c2d31;"></div>
<div class="a" style="left:1104px;top:372px;width:430px;height:2px;background:#45464c;"></div>
<div class="a" style="left:1105px;top:351px;width:21.5px;height:21px;background:#353842;border:1px solid #5a5c62;"></div>
<div class="a" style="left:1128px;top:351px;width:21.5px;height:21px;background:#353842;border:1px solid #5a5c62;"></div>
<div class="a" style="left:1151px;top:351px;width:21.5px;height:21px;background:#353842;border:1px solid #5a5c62;"></div>
<div class="a" style="left:1174px;top:351px;width:21.5px;height:21px;background:#353842;border:1px solid #5a5c62;"></div>
<div class="a" style="left:1197px;top:351px;width:21.5px;height:21px;background:#353842;border:1px solid #5a5c62;"></div>
<div class="a" style="left:1220px;top:351px;width:21.5px;height:21px;background:#353842;border:1px solid #5a5c62;"></div>
<div class="a" style="left:1243px;top:351px;width:21.5px;height:21px;background:#353842;border:1px solid #5a5c62;"></div>
<svg class="a" style="left:1105px;top:351px" width="22" height="21"><path d="M6 9H16L11 14Z" fill="#a9b3cc"/></svg>
<svg class="a" style="left:1128px;top:351px" width="22" height="21"><rect x="6" y="5.5" width="10" height="10" fill="#a9b3cc"/></svg>
<svg class="a" style="left:1151px;top:351px" width="22" height="21"><path d="M5.5 10.5L10 6V8.5H16.5V12.5H10V15Z" fill="none" stroke="#a9b3cc" stroke-width="1.1" stroke-linejoin="miter"/></svg>
<svg class="a" style="left:1174px;top:351px" width="22" height="21"><path d="M16.5 10.5L12 6V8.5H5.5V12.5H12V15Z" fill="none" stroke="#6b7180" stroke-width="1.1"/></svg>
<svg class="a" style="left:1197px;top:351px" width="22" height="21"><path d="M11 5V16M5.5 10.5H16.5" stroke="#b9c1d8" stroke-width="1.7"/></svg>
<svg class="a" style="left:1220px;top:351px" width="22" height="21"><path d="M11 4.5L12.6 8.9L17.2 8.9L13.5 11.7L14.9 16.2L11 13.4L7.1 16.2L8.5 11.7L4.8 8.9L9.4 8.9Z" fill="#c3cadc"/></svg>
<svg class="a" style="left:1243px;top:351px" width="22" height="21"><path d="M5.1 9.6L10.7 5.2H14.6V7L17 9.6M6.4 9V15.7H15.8V9" fill="none" stroke="#70768a" stroke-width="1.1"/><rect x="8.5" y="10.7" width="1.9" height="4.6" fill="#b4bcd2"/><rect x="12" y="11.2" width="2.1" height="1.9" fill="#b4bcd2"/></svg>
<div class="a" style="left:1265px;top:350px;width:197px;height:23px;background:#353842;"></div>
<svg class="a" style="left:1265px;top:348px" width="80" height="26"><path d="M3.8 20.2L8.6 8.6M67.8 20.2L72.6 8.6" stroke="#a3aabb" stroke-width="1.25"/></svg>
<div class="t" style="left:1279.5px;top:354.57px;font-size:13.5px;color:#a3aabb;transform:scaleX(0.9889);transform-origin:0 0;">project1</div>
<div class="t" style="left:1343.5px;top:354.57px;font-size:13.5px;color:#a3aabb;transform:scaleX(1.1089);transform-origin:0 0;">&gt;&gt;</div>
<div class="a" style="left:1465px;top:351px;width:21px;height:21px;background:#353842;border:1px solid #5a5c62;"></div>
<div class="a" style="left:1488px;top:351px;width:21px;height:21px;background:#353842;border:1px solid #5a5c62;"></div>
<div class="a" style="left:1511px;top:351px;width:21px;height:21px;background:#353842;border:1px solid #5a5c62;"></div>
<div class="t" style="left:1465px;top:354.99px;width:21px;text-align:center;font-size:13px;color:#a9b3cc">1</div>
<svg class="a" style="left:1488px;top:351px" width="21" height="21"><rect x="5.5" y="6" width="10" height="9.5" fill="none" stroke="#a9b3cc" stroke-width="1.2"/><rect x="5" y="5.5" width="11" height="2" fill="#a9b3cc"/></svg>
<svg class="a" style="left:1511px;top:351px" width="21" height="21"><path d="M8.5 4.5H12.5V11H15.5L10.5 16L5.5 11H8.5Z" fill="none" stroke="#a9b3cc" stroke-width="1.1"/></svg>
<div class="a" style="left:1104px;top:374px;width:430px;height:48px;background:#262626;"></div>
<div class="a" style="left:1149px;top:378px;width:380px;height:20px;background:#2d2d2d;"></div>
<div class="t" style="left:1107px;top:381.29px;font-size:13px;color:#e8e8e8;transform:scaleX(0.9965);transform-origin:0 0;font-weight:bold">Slider</div>
<div class="m" style="left:1152px;top:382.77px;font-size:14px;color:#d0d0d0;transform:scaleX(0.9522);transform-origin:0 0;">slider1</div>
<svg class="a" style="left:1104px;top:398px" width="430" height="24" viewBox="0 0 430 24">
<text x="4" y="19" font-family="Liberation Sans" font-weight="bold" font-size="18.5" fill="#dcdcdc">?</text>
<rect x="22" y="3.5" width="19" height="18" fill="#3a78b0"/>
<path d="M22 12Q27 9.5 32 11.5Q37 13 41 11V21.5H22Z" fill="#f5cc3c"/>
<text x="25.5" y="19.5" font-family="Liberation Sans" font-weight="bold" font-size="17" fill="#fff" stroke="#222" stroke-width="0.8">?</text>
<rect x="51.5" y="5" width="4.5" height="3.5" fill="#f0f0f0"/><rect x="51.5" y="10" width="4.5" height="10" fill="#f0f0f0"/>
<path d="M298.8 18.6L300.2 13.6L309.2 4.6L313.2 8.6L304.2 17.6Z" fill="#7a7a7a"/><path d="M301.5 14.5L308.5 7.5" stroke="#262626" stroke-width="0.9"/>
<ellipse cx="327" cy="10.5" rx="8" ry="5" fill="#777"/><path d="M321 13.5L319.5 17.5L325 14.5Z" fill="#777"/>
<path d="M341 17.5L346.5 7L357.5 12.5L352 21Z" fill="none" stroke="#eee" stroke-width="1.5"/><path d="M349 6.5L352 4.5L354.5 8L351 9.5Z" fill="#eee"/>
<circle cx="371.5" cy="12" r="8.8" fill="#f4f4f4"/>
<path d="M366 11.5V8.5Q366 5.5 371 5.5Q375.5 5.5 375.5 8.5V12H369.5Q367.5 12 367.5 14V15.5H366Z" fill="#3d78b0"/>
<path d="M377 12.5V15.5Q377 18.5 372 18.5Q367.5 18.5 367.5 15.5V12H373.5Q375.5 12 375.5 10V8.5H377Z" fill="#f5c93a"/>
<path d="M386.5 12H400.5M393.5 5V19" stroke="#f0f0f0" stroke-width="3"/>
<circle cx="415.5" cy="12" r="8" fill="none" stroke="#ddd" stroke-width="1.6"/><circle cx="415.5" cy="12" r="4.8" fill="none" stroke="#ddd" stroke-width="1.6"/><circle cx="415.5" cy="12" r="1.8" fill="#ddd"/>
</svg>
<div class="a" style="left:1104px;top:422px;width:430px;height:367px;background:#404040;"></div>
<div class="a" style="left:1104px;top:422px;width:185px;height:367px;background:#3e3e3e;"></div>
<div class="t" style="left:1113px;top:434.02px;font-size:13.2px;color:#c2c2c2;transform:scaleX(1.0083);transform-origin:0 0;">Slider</div>
<div class="t" style="left:1159px;top:434.02px;font-size:13.2px;color:#c2c2c2;transform:scaleX(1.0099);transform-origin:0 0;">Layout</div>
<div class="t" style="left:1211px;top:434.02px;font-size:13.2px;color:#c2c2c2;transform:scaleX(0.9189);transform-origin:0 0;">Panel</div>
<div class="t" style="left:1255px;top:434.02px;font-size:13.2px;color:#c2c2c2;transform:scaleX(0.9612);transform-origin:0 0;">Look</div>
<div class="t" style="left:1295px;top:434.02px;font-size:13.2px;color:#c2c2c2;transform:scaleX(0.9975);transform-origin:0 0;">Children</div>
<div class="t" style="left:1357px;top:434.02px;font-size:13.2px;color:#c2c2c2;transform:scaleX(1.0654);transform-origin:0 0;">Drag/Dro</div>
<div class="t" style="left:1423px;top:434.02px;font-size:13.2px;color:#c2c2c2;transform:scaleX(0.9668);transform-origin:0 0;">Extension</div>
<div class="t" style="left:1488px;top:434.02px;font-size:13.2px;color:#c2c2c2;transform:scaleX(0.9525);transform-origin:0 0;">Comm</div>
<div class="a" style="left:1414.5px;top:430px;width:8px;height:20px;background:#404040;"></div>
<div class="a" style="left:1479.5px;top:430px;width:8px;height:20px;background:#404040;"></div>
<div class="a" style="left:1519px;top:424px;width:15px;height:365px;background:#404040;"></div>
<div class="a" style="left:1107px;top:452.2px;width:412px;height:1.7px;background:#b4b4b4;"></div>
<div class="a" style="left:1154px;top:450px;width:51.5px;height:4px;background:#e2e2e2;"></div>
<div class="a" style="left:1520px;top:424px;width:13px;height:200px;background:#5a5a5a;border:1px solid #6a6a6a;"></div>
<div class="a" style="left:1520px;top:624px;width:13px;height:139px;background:#474747;"></div>
<div class="a" style="left:1520px;top:763px;width:13px;height:24px;background:#cfcfcf;"></div>
<svg class="a" style="left:1520px;top:763px" width="13" height="24"><path d="M2.5 10.5H10.5L6.5 3Z" fill="#9a9a9a"/><path d="M2.5 15H10.5L6.5 22Z" fill="#111"/></svg>
<div class="t" style="left:1276.5px;top:461.87px;font-size:13.5px;color:#cccccc;transform:scaleX(0.9428);transform-origin:0 0;">X</div>
<div class="a" style="left:1289px;top:458.5px;width:50.5px;height:19.5px;background:#525252;"></div>
<div class="t" style="left:1292.5px;top:461.87px;font-size:13.5px;color:#d6d6d6;">0</div>
<div class="a" style="left:1341px;top:467.5px;width:178px;height:2px;background:#2c2c2c;"></div>
<div class="a" style="left:1342.8px;top:461.9px;width:8.5px;height:13px;background:#5c5c5c;"></div>
<div class="t" style="left:1277px;top:484.07px;font-size:13.5px;color:#cccccc;transform:scaleX(0.8873);transform-origin:0 0;">Y</div>
<div class="a" style="left:1289px;top:480.7px;width:50.5px;height:19.5px;background:#525252;"></div>
<div class="t" style="left:1292.5px;top:484.07px;font-size:13.5px;color:#d6d6d6;">220</div>
<div class="a" style="left:1341px;top:489.7px;width:178px;height:2px;background:#2c2c2c;"></div>
<div class="a" style="left:1367px;top:484.09999999999997px;width:8.5px;height:13px;background:#5c5c5c;"></div>
<div class="t" style="left:1250.5px;top:506.27px;font-size:13.5px;color:#cccccc;transform:scaleX(0.9995);transform-origin:0 0;">Width</div>
<div class="a" style="left:1289px;top:502.90000000000003px;width:50.5px;height:19.5px;background:#525252;"></div>
<div class="t" style="left:1292.5px;top:506.27px;font-size:13.5px;color:#d6d6d6;">640</div>
<div class="a" style="left:1341px;top:511.90000000000003px;width:178px;height:2px;background:#2c2c2c;"></div>
<div class="a" style="left:1412px;top:506.3px;width:8.5px;height:13px;background:#5c5c5c;"></div>
<div class="t" style="left:1246px;top:528.47px;font-size:13.5px;color:#cccccc;transform:scaleX(0.9992);transform-origin:0 0;">Height</div>
<div class="a" style="left:1289px;top:525.1px;width:50.5px;height:19.5px;background:#525252;"></div>
<div class="t" style="left:1292.5px;top:528.47px;font-size:13.5px;color:#d6d6d6;">50</div>
<div class="a" style="left:1341px;top:534.1px;width:178px;height:2px;background:#2c2c2c;"></div>
<div class="a" style="left:1348px;top:528.5px;width:8.5px;height:13px;background:#5c5c5c;"></div>
<div class="t" style="left:1210px;top:550.67px;font-size:13.5px;color:#cccccc;transform:scaleX(0.9703);transform-origin:0 0;">Fixed Aspect</div>
<div class="a" style="left:1289px;top:547.3000000000001px;width:230px;height:18.5px;background:#575757;"></div>
<div class="t" style="left:1294px;top:550.67px;font-size:13.5px;color:#d6d6d6;">Off</div>
<div class="t" style="left:1211px;top:572.87px;font-size:13.5px;color:#5f5f5f;transform:scaleX(0.9667);transform-origin:0 0;">Aspect Ratio</div>
<div class="t" style="left:1292.5px;top:572.87px;font-size:13.5px;color:#5f5f5f;">1</div>
<div class="a" style="left:1341px;top:578.5px;width:178px;height:2px;background:#3a3a3a;"></div>
<div class="a" style="left:1450.0px;top:572.5px;width:10px;height:14px;background:#444444;border:1px solid #4a4a4a;"></div>
<div class="t" style="left:1212px;top:595.07px;font-size:13.5px;color:#cccccc;transform:scaleX(0.9926);transform-origin:0 0;">Depth Layer</div>
<div class="a" style="left:1289px;top:591.7px;width:50.5px;height:19.5px;background:#525252;"></div>
<div class="t" style="left:1292.5px;top:595.07px;font-size:13.5px;color:#d6d6d6;">0</div>
<div class="a" style="left:1341px;top:600.7px;width:178px;height:2px;background:#2c2c2c;"></div>
<div class="a" style="left:1342.8px;top:595.1px;width:8.5px;height:13px;background:#5c5c5c;"></div>
<div class="a" style="left:1107px;top:616.3px;width:412px;height:1.4px;background:#4c4c4c;"></div>
<div class="t" style="left:1189px;top:627.17px;font-size:13.5px;color:#cccccc;transform:scaleX(0.9766);transform-origin:0 0;">Horizontal Mode</div>
<div class="a" style="left:1289px;top:623.8000000000001px;width:230px;height:18.5px;background:#575757;"></div>
<div class="t" style="left:1294px;top:627.17px;font-size:13.5px;color:#d6d6d6;">Fixed Width</div>
<div class="t" style="left:1216.5px;top:649.27px;font-size:13.5px;color:#cccccc;transform:scaleX(1.0027);transform-origin:0 0;">Left Anchor</div>
<div class="a" style="left:1289px;top:645.9000000000001px;width:50.5px;height:19.5px;background:#525252;"></div>
<div class="t" style="left:1292.5px;top:649.27px;font-size:13.5px;color:#d6d6d6;transform:scaleX(1.2512);transform-origin:0 0;">0.5</div>
<div class="a" style="left:1341px;top:654.9000000000001px;width:178px;height:2px;background:#2c2c2c;"></div>
<div class="a" style="left:1451.5px;top:649.3000000000001px;width:8.5px;height:13px;background:#5c5c5c;"></div>
<div class="t" style="left:1222.5px;top:671.37px;font-size:13.5px;color:#5f5f5f;transform:scaleX(1.0073);transform-origin:0 0;">Left Offset</div>
<div class="t" style="left:1292.5px;top:671.37px;font-size:13.5px;color:#5f5f5f;">0</div>
<div class="a" style="left:1341px;top:677.0000000000001px;width:178px;height:2px;background:#3a3a3a;"></div>
<div class="a" style="left:1451.0px;top:671.0000000000001px;width:10px;height:14px;background:#444444;border:1px solid #4a4a4a;"></div>
<div class="t" style="left:1208px;top:693.47px;font-size:13.5px;color:#5f5f5f;transform:scaleX(0.9962);transform-origin:0 0;">Right Anchor</div>
<div class="t" style="left:1292.5px;top:693.47px;font-size:13.5px;color:#5f5f5f;">1</div>
<div class="a" style="left:1341px;top:699.1000000000001px;width:178px;height:2px;background:#3a3a3a;"></div>
<div class="t" style="left:1214px;top:715.57px;font-size:13.5px;color:#5f5f5f;transform:scaleX(0.9993);transform-origin:0 0;">Right Offset</div>
<div class="t" style="left:1292.5px;top:715.57px;font-size:13.5px;color:#5f5f5f;">0</div>
<div class="a" style="left:1341px;top:721.2px;width:178px;height:2px;background:#3a3a3a;"></div>
<div class="a" style="left:1451.0px;top:715.2px;width:10px;height:14px;background:#444444;border:1px solid #4a4a4a;"></div>
<div class="t" style="left:1184.5px;top:737.67px;font-size:13.5px;color:#cccccc;transform:scaleX(0.9995);transform-origin:0 0;">Horizontal Origin</div>
<div class="a" style="left:1289px;top:734.3000000000001px;width:50.5px;height:19.5px;background:#525252;"></div>
<div class="t" style="left:1292.5px;top:737.67px;font-size:13.5px;color:#d6d6d6;transform:scaleX(1.2512);transform-origin:0 0;">0.5</div>
<div class="a" style="left:1341px;top:743.3000000000001px;width:178px;height:2px;background:#2c2c2c;"></div>
<div class="a" style="left:1451.5px;top:737.7px;width:8.5px;height:13px;background:#5c5c5c;"></div>
<div class="t" style="left:1158.5px;top:759.77px;font-size:13.5px;color:#5f5f5f;transform:scaleX(0.9937);transform-origin:0 0;">Horizontal Fill Weight</div>
<div class="t" style="left:1292.5px;top:759.77px;font-size:13.5px;color:#5f5f5f;">1</div>
<div class="a" style="left:1341px;top:765.4000000000001px;width:178px;height:2px;background:#3a3a3a;"></div>
<div class="a" style="left:1451.0px;top:759.4000000000001px;width:10px;height:14px;background:#444444;border:1px solid #4a4a4a;"></div>
<div class="a" style="left:1107px;top:782.5px;width:412px;height:1.4px;background:#4c4c4c;"></div>
<div class="a" style="left:7px;top:789px;width:1527px;height:71px;background:#2c2d31;"></div>
<div class="a" style="left:7px;top:789px;width:279px;height:71px;background:#0d0c18;border:1px solid #66666e;"></div>
<div class="t" style="left:13.7px;top:795.69px;font-size:13px;color:#7f858f;transform:scaleX(1.1101);transform-origin:0 0;">Start:</div>
<div class="t" style="left:74px;top:795.69px;font-size:13px;color:#6a96da;">1</div>
<div class="t" style="left:143.7px;top:795.69px;font-size:13px;color:#7f858f;transform:scaleX(1.0393);transform-origin:0 0;">End:</div>
<div class="t" style="left:204px;top:795.69px;font-size:13px;color:#6a96da;transform:scaleX(1.0736);transform-origin:0 0;">600</div>
<div class="t" style="left:13.7px;top:811.59px;font-size:13px;color:#7f858f;transform:scaleX(1.0477);transform-origin:0 0;">RStart:</div>
<div class="t" style="left:74px;top:811.59px;font-size:13px;color:#6a96da;">1</div>
<div class="t" style="left:143.7px;top:811.59px;font-size:13px;color:#7f858f;transform:scaleX(0.9823);transform-origin:0 0;">REnd:</div>
<div class="t" style="left:204px;top:811.59px;font-size:13px;color:#6a96da;transform:scaleX(1.0736);transform-origin:0 0;">600</div>
<div class="t" style="left:13.7px;top:826.69px;font-size:13px;color:#7f858f;transform:scaleX(0.9133);transform-origin:0 0;">FPS:</div>
<div class="t" style="left:74px;top:826.69px;font-size:13px;color:#6a96da;transform:scaleX(1.0825);transform-origin:0 0;">60.0</div>
<div class="t" style="left:143.7px;top:826.69px;font-size:13px;color:#7f858f;transform:scaleX(1.0460);transform-origin:0 0;">Tempo:</div>
<div class="t" style="left:204px;top:826.69px;font-size:13px;color:#6a96da;transform:scaleX(1.0662);transform-origin:0 0;">120.0</div>
<div class="t" style="left:13.7px;top:841.69px;font-size:13px;color:#7f858f;transform:scaleX(1.0216);transform-origin:0 0;">ResetF:</div>
<div class="t" style="left:74px;top:841.69px;font-size:13px;color:#6a96da;">1</div>
<div class="t" style="left:143.7px;top:841.69px;font-size:13px;color:#7f858f;transform:scaleX(0.9994);transform-origin:0 0;">T Sig:</div>
<div class="t" style="left:204px;top:841.69px;font-size:13px;color:#6a96da;">4</div>
<div class="t" style="left:239.4px;top:841.69px;font-size:13px;color:#6a96da;">4</div>
<div class="a" style="left:286px;top:789px;width:1248px;height:1px;background:#55565c;"></div>
<div class="a" style="left:286px;top:790px;width:1246px;height:13px;background:#0e0e0e;"></div>
<div class="a" style="left:286px;top:803px;width:1246px;height:2px;background:#2a2a2e;"></div>
<div class="a" style="left:389px;top:790px;width:1px;height:13px;background:#5a5a5a;"></div>
<div class="t" style="left:391px;top:790.61px;font-size:11.8px;color:#8e8e8e;">51</div>
<div class="a" style="left:493px;top:790px;width:1px;height:13px;background:#5a5a5a;"></div>
<div class="t" style="left:495px;top:790.61px;font-size:11.8px;color:#8e8e8e;">101</div>
<div class="a" style="left:597px;top:790px;width:1px;height:13px;background:#5a5a5a;"></div>
<div class="t" style="left:599px;top:790.61px;font-size:11.8px;color:#8e8e8e;">151</div>
<div class="a" style="left:702px;top:790px;width:1px;height:13px;background:#5a5a5a;"></div>
<div class="t" style="left:704px;top:790.61px;font-size:11.8px;color:#8e8e8e;">201</div>
<div class="a" style="left:806px;top:790px;width:1px;height:13px;background:#5a5a5a;"></div>
<div class="t" style="left:808px;top:790.61px;font-size:11.8px;color:#8e8e8e;">251</div>
<div class="a" style="left:909px;top:790px;width:1px;height:13px;background:#5a5a5a;"></div>
<div class="t" style="left:911px;top:790.61px;font-size:11.8px;color:#8e8e8e;">301</div>
<div class="a" style="left:1014px;top:790px;width:1px;height:13px;background:#5a5a5a;"></div>
<div class="t" style="left:1016px;top:790.61px;font-size:11.8px;color:#8e8e8e;">351</div>
<div class="a" style="left:1118px;top:790px;width:1px;height:13px;background:#5a5a5a;"></div>
<div class="t" style="left:1120px;top:790.61px;font-size:11.8px;color:#8e8e8e;">401</div>
<div class="a" style="left:1222px;top:790px;width:1px;height:13px;background:#5a5a5a;"></div>
<div class="t" style="left:1224px;top:790.61px;font-size:11.8px;color:#8e8e8e;">451</div>
<div class="a" style="left:1325px;top:790px;width:1px;height:13px;background:#5a5a5a;"></div>
<div class="t" style="left:1327px;top:790.61px;font-size:11.8px;color:#8e8e8e;">501</div>
<div class="a" style="left:1429px;top:790px;width:1px;height:13px;background:#5a5a5a;"></div>
<div class="t" style="left:1431px;top:790.61px;font-size:11.8px;color:#8e8e8e;">551</div>
<div class="t" style="left:288px;top:790.61px;font-size:11.8px;color:#8e8e8e;">1</div>
<div class="t" style="left:1509px;top:790.61px;font-size:11.8px;color:#8e8e8e;">600</div>
<div class="a" style="left:1246px;top:791px;width:2px;height:12px;background:#6a84c0;"></div>
<div class="a" style="left:286px;top:804px;width:1246px;height:11px;background:#1d1e22;"></div>
<div class="a" style="left:288px;top:805px;width:21px;height:8.5px;background:#5e5e5e;border:1px solid #6e6e6e;"></div>
<div class="t" style="left:288px;top:803px;width:21px;text-align:center;font-size:9px;color:#888">...</div>
<div class="a" style="left:310px;top:805px;width:1197px;height:8.5px;background:#3a4a6e;"></div>
<div class="a" style="left:1508px;top:805px;width:22px;height:8.5px;background:#5e5e5e;border:1px solid #6e6e6e;"></div>
<div class="t" style="left:1508px;top:803px;width:22px;text-align:center;font-size:9px;color:#888">...</div>
<div class="a" style="left:286px;top:813.5px;width:1248px;height:2px;background:#1a1b1e;"></div>
<div class="a" style="left:286px;top:815.5px;width:1248px;height:1px;background:#55565c;"></div>
<div class="a" style="left:290px;top:817px;width:20px;height:19px;background:#353842;border:1px solid #5a5c62;"></div>
<div class="a" style="left:290px;top:837px;width:20px;height:19px;background:#353842;border:1px solid #5a5c62;"></div>
<svg class="a" style="left:290px;top:817px" width="20" height="39"><path d="M8 15L12 4" stroke="#70778a" stroke-width="1.2"/><path d="M10 24V35M7.5 24H12.5M7.5 35H12.5" stroke="#70778a" stroke-width="1.2"/></svg>
<div class="a" style="left:313px;top:817px;width:67px;height:19px;background:#34363e;border:1px solid #5a5c62;"></div>
<div class="a" style="left:315px;top:818.5px;width:64px;height:15.5px;background:#c98a4c;"></div>
<div class="t" style="left:315px;top:819.77px;width:64px;text-align:center;font-size:13.5px;color:#6a1c0c">TimeCode</div>
<div class="a" style="left:313px;top:837px;width:67px;height:19px;background:#353842;border:1px solid #5a5c62;"></div>
<div class="t" style="left:313px;top:840.07px;width:67px;text-align:center;font-size:13.5px;color:#a8b0c0">Beats</div>
<div class="a" style="left:384px;top:817px;width:200px;height:40px;background:#000;border:1px solid #4a4b50;"></div>
<div class="t" style="left:404px;top:826.71px;font-size:25.5px;color:#78a8f0;transform:scaleX(1.1802);transform-origin:0 0;">00:00:07.41</div>
<div class="a" style="left:586px;top:817px;width:135px;height:40px;background:#000;border:1px solid #4a4b50;"></div>
<div class="t" style="left:630px;top:826.71px;font-size:25.5px;color:#78a8f0;transform:scaleX(1.1047);transform-origin:0 0;">462</div>
<div class="a" style="left:723px;top:817.5px;width:38.5px;height:39px;background:#353842;border:1px solid #5a5c62;"></div>
<div class="a" style="left:765px;top:817.5px;width:38.5px;height:39px;background:#353842;border:1px solid #5a5c62;"></div>
<div class="a" style="left:806px;top:817.5px;width:38.5px;height:39px;background:#353842;border:1px solid #5a5c62;"></div>
<div class="a" style="left:847px;top:817.5px;width:38.5px;height:39px;background:#c98a4c;border:1px solid #5a5c62;"></div>
<div class="a" style="left:888px;top:817.5px;width:38.5px;height:39px;background:#353842;border:1px solid #5a5c62;"></div>
<div class="a" style="left:929px;top:817.5px;width:38.5px;height:39px;background:#353842;border:1px solid #5a5c62;"></div>
<svg class="a" style="left:723px;top:817px" width="250" height="40">
<rect x="14" y="14.5" width="2" height="10" fill="#a9b1c6"/><path d="M22 14.5V24.5L17 19.5Z M27 14.5V24.5L22 19.5Z" fill="#a9b1c6"/>
<rect x="59" y="14.5" width="2.5" height="10" fill="#a9b1c6"/><rect x="64" y="14.5" width="2.5" height="10" fill="#a9b1c6"/>
<path d="M105 14.5V24.5L99.5 19.5Z" fill="#a9b1c6"/>
<path d="M140.5 14.5V24.5L146 19.5Z" fill="#5a1a0a"/>
<rect x="180" y="19" width="6" height="1.5" fill="#a9b1c6"/>
<path d="M225 13.5V25.5M219 19.5H231" stroke="#a9b1c6" stroke-width="1.5"/>
</svg>
<div class="t" style="left:973px;top:819.57px;font-size:13.5px;color:#b4bac8;transform:scaleX(0.9855);transform-origin:0 0;">Range Limit</div>
<div class="a" style="left:971px;top:838.5px;width:52px;height:18.5px;background:#34363e;border:1px solid #5a5c62;"></div>
<div class="a" style="left:972.5px;top:840px;width:49px;height:15.5px;background:#c98a4c;"></div>
<div class="t" style="left:972.5px;top:840.57px;width:49px;text-align:center;font-size:13.5px;color:#6a1c0c">Loop</div>
<div class="a" style="left:1024px;top:838.5px;width:45px;height:18px;background:#353842;border:1px solid #5a5c62;"></div>
<div class="t" style="left:1024px;top:840.57px;width:45px;text-align:center;font-size:13.5px;color:#a8b0c0">Once</div>
<div class="a" style="left:286px;top:858px;width:1248px;height:1.5px;background:#5a5a60;"></div>
<div class="a" style="left:1531px;top:816px;width:1.5px;height:43px;background:#5a5a60;"></div>
<div class="a" style="left:0px;top:860px;width:1536px;height:7px;background:#000;"></div>
<div class="a" style="left:48px;top:865px;width:289px;height:2px;background:#262626;"></div>
<div class="a" style="left:5px;top:550px;width:2px;height:9px;background:#a8a8a8;"></div>
<div class="a" style="left:488px;top:865px;width:48px;height:2px;background:#2e2e2e;"></div>
<div class="a" style="left:1533px;top:790px;width:3px;height:25px;background:#4a4a4a;"></div>
</body></html>
